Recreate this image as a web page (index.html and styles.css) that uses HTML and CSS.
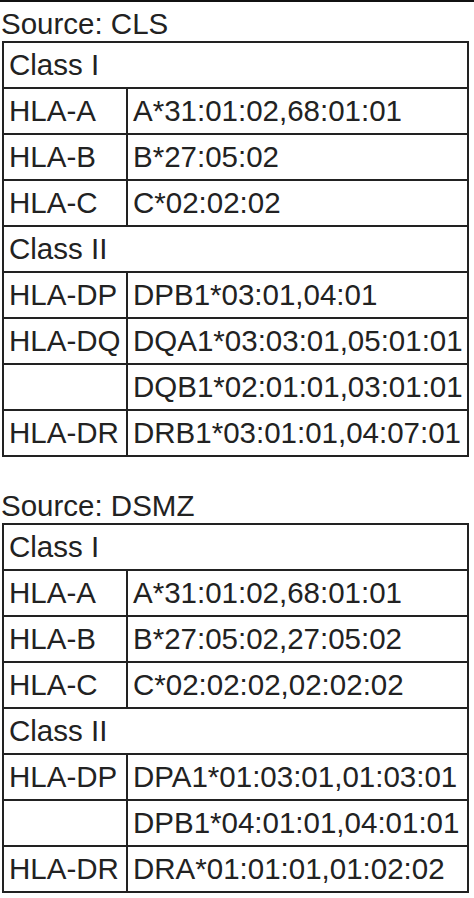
FILE: index.html
```html
<!DOCTYPE html>
<html>
<head>
<meta charset="utf-8">
<link rel="stylesheet" href="styles.css">
</head>
<body>
<div class="page">
  <section class="source">
    <h2 class="source-title">Source: CLS</h2>
    <table class="hla">
      <colgroup><col class="c1"><col class="c2"></colgroup>
      <tr><td colspan="2">Class I</td></tr>
      <tr><td>HLA-A</td><td>A*31:01:02,68:01:01</td></tr>
      <tr><td>HLA-B</td><td>B*27:05:02</td></tr>
      <tr><td>HLA-C</td><td>C*02:02:02</td></tr>
      <tr><td colspan="2">Class II</td></tr>
      <tr><td>HLA-DP</td><td>DPB1*03:01,04:01</td></tr>
      <tr><td>HLA-DQ</td><td>DQA1*03:03:01,05:01:01</td></tr>
      <tr><td></td><td>DQB1*02:01:01,03:01:01</td></tr>
      <tr><td>HLA-DR</td><td>DRB1*03:01:01,04:07:01</td></tr>
    </table>
  </section>
  <section class="source second">
    <h2 class="source-title">Source: DSMZ</h2>
    <table class="hla">
      <colgroup><col class="c1"><col class="c2"></colgroup>
      <tr><td colspan="2">Class I</td></tr>
      <tr><td>HLA-A</td><td>A*31:01:02,68:01:01</td></tr>
      <tr><td>HLA-B</td><td>B*27:05:02,27:05:02</td></tr>
      <tr><td>HLA-C</td><td>C*02:02:02,02:02:02</td></tr>
      <tr><td colspan="2">Class II</td></tr>
      <tr><td>HLA-DP</td><td>DPA1*01:03:01,01:03:01</td></tr>
      <tr><td></td><td>DPB1*04:01:01,04:01:01</td></tr>
      <tr><td>HLA-DR</td><td>DRA*01:01:01,01:02:02</td></tr>
    </table>
  </section>
</div>
</body>
</html>
```
FILE: styles.css
```css
html, body {
  margin: 0;
  padding: 0;
  background: #fff;
}
body {
  font-family: "Liberation Sans", Arial, sans-serif;
  color: #222;
  font-size: 29.5px;
  width: 474px;
  border-top: 2px solid #111;
}
.page {
  padding-top: 5px;
}
.source-title {
  margin: 0;
  padding-left: 1px;
  font-size: 29.5px;
  font-weight: normal;
  line-height: 34px;
}
.second {
  margin-top: 32px;
}
.hla {
  margin-left: 2px;
  width: 467px;
  border-collapse: collapse;
  table-layout: fixed;
}
.hla .c1 { width: 124px; }
.hla td {
  border: 2px solid #222;
  padding: 6px 2px 6px 5px;
  line-height: 32px;
  height: 32px;
  white-space: nowrap;
  overflow: hidden;
  vertical-align: middle;
}
```
